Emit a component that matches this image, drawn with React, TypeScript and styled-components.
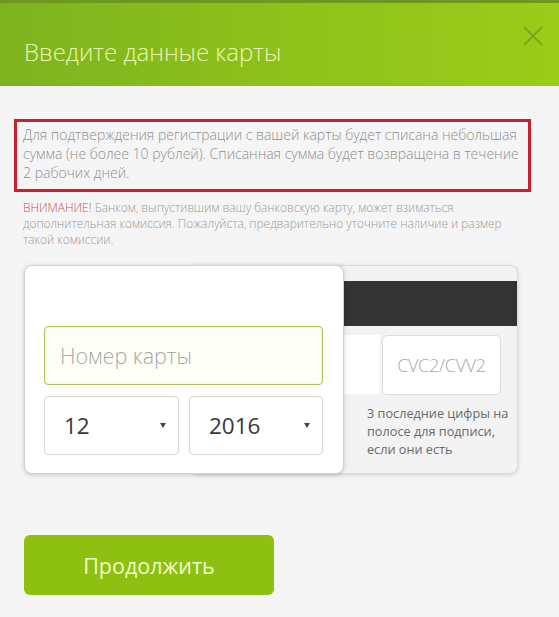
import React from "react";
import styled, { createGlobalStyle } from "styled-components";

const Global = createGlobalStyle`
  html, body { margin: 0; padding: 0; background: #f6f5f6; }
  body { font-family: "Open Sans", "Noto Sans", sans-serif; }
  * { box-sizing: border-box; }
`;

const Page = styled.div`
  width: 559px;
  height: 617px;
  background: #f6f5f6;
  overflow: hidden;
`;

const Header = styled.header`
  height: 86px;
  background: linear-gradient(90deg, #7db31f 0%, #8dc01b 45%, #9ccb18 100%);
  border-top: 3px solid #6d9720;
  display: flex;
  align-items: center;
  justify-content: space-between;
  padding: 15px 16px 0 24px;
`;

const Title = styled.h1`
  margin: 0;
  font-size: 24px;
  font-weight: 300;
  color: #ecf8b4;
  line-height: 1;
`;

const Close = styled.button`
  border: 0;
  background: none;
  padding: 0;
  width: 20px;
  height: 20px;
  align-self: flex-start;
  margin-top: 8px;
  cursor: pointer;
`;

const Content = styled.main`
  padding: 33px 28px 0 14px;
`;

const Notice = styled.div`
  border: 3px solid #c8202e;
  padding: 3px 8px 7px 6px;
  font-size: 14px;
  font-weight: 300;
  line-height: 19px;
  color: #8f8f8f;
`;

const Warning = styled.p`
  margin: 7px 0 0 9px;
  font-size: 11.9px;
  font-weight: 300;
  line-height: 16px;
  color: #999999;
`;

const Attention = styled.span`
  color: #c9524f;
`;

const Cards = styled.div`
  display: grid;
  margin: 18px 0 0 10px;
  width: 494px;
`;

const BackCard = styled.div`
  grid-area: 1 / 1;
  justify-self: end;
  width: 328px;
  height: 209px;
  background: #f3f3f3;
  border: 1px solid #dcdcdc;
  border-radius: 8px;
  box-shadow: 0 1px 4px rgba(0, 0, 0, 0.15);
  padding-top: 15px;
`;

const Stripe = styled.div`
  height: 45px;
  background: #333333;
`;

const SigRow = styled.div`
  display: flex;
  margin-top: 9px;
  padding-right: 16px;
  gap: 2px;
`;

const SigStrip = styled.div`
  flex: 1;
  height: 59px;
  background: #ffffff;
`;

const CvcBox = styled.div`
  width: 119px;
  height: 60px;
  background: #fff;
  border: 1px solid #dcdcdc;
  border-radius: 5px;
  display: flex;
  align-items: center;
  justify-content: center;
  font-size: 18px;
  font-weight: 300;
  color: #a8a8a8;
  letter-spacing: -0.3px;
`;

const Hint = styled.p`
  margin: 9px 0 0 176px;
  font-size: 12.7px;
  line-height: 18px;
  color: #6a6a6a;
`;

const FrontCard = styled.div`
  grid-area: 1 / 1;
  justify-self: start;
  z-index: 1;
  width: 320px;
  height: 209px;
  background: #ffffff;
  border: 1px solid #d2d2d2;
  border-radius: 8px;
  box-shadow: 0 1px 5px rgba(0, 0, 0, 0.18);
  padding: 60px 20px 0 19px;
  display: grid;
  grid-template-columns: 135px 134px;
  grid-template-rows: 59px 59px;
  column-gap: 10px;
  row-gap: 11px;
`;

const NumberInput = styled.div`
  grid-column: 1 / 3;
  border: 1px solid #a9c35e;
  border-radius: 4px;
  background: #fdfef6;
  box-shadow: inset 0 0 3px rgba(190, 220, 120, 0.35);
  display: flex;
  align-items: center;
  padding-left: 15px;
  font-size: 21.5px;
  font-weight: 300;
  color: #a8a8a8;
`;

const Select = styled.div`
  border: 1px solid #d6d6d6;
  border-radius: 4px;
  background: #fff;
  display: flex;
  align-items: center;
  justify-content: space-between;
  padding: 0 12px 0 19px;
  font-size: 22.5px;
  color: #383838;
`;

const Arrow = styled.span`
  width: 0;
  height: 0;
  border-left: 3px solid transparent;
  border-right: 3px solid transparent;
  border-top: 5px solid #444;
`;

const Button = styled.button`
  margin: 61px 0 0 10px;
  width: 250px;
  height: 60px;
  border: 0;
  border-radius: 6px;
  background: #8dc010;
  color: #f0fcc9;
  font-family: "Open Sans", sans-serif;
  font-size: 21.5px;
  font-weight: 500;
  cursor: pointer;
`;

export default function App() {
  return (
    <Page>
      <Global />
      <Header>
        <Title>Введите данные карты</Title>
        <Close aria-label="close">
          <svg width="20" height="20" viewBox="0 0 20 20">
            <path d="M1 1 L19 19 M19 1 L1 19" stroke="#78a51b" strokeWidth="1.8" fill="none" />
          </svg>
        </Close>
      </Header>
      <Content>
        <Notice>
          Для подтверждения регистрации с вашей карты будет списана небольшая сумма (не более 10 рублей). Списанная сумма будет возвращена в течение 2 рабочих дней.
        </Notice>
        <Warning>
          <Attention>ВНИМАНИЕ!</Attention> Банком, выпустившим вашу банковскую карту, может взиматься дополнительная комиссия. Пожалуйста, предварительно уточните наличие и размер такой комиссии.
        </Warning>
        <Cards>
          <BackCard>
            <Stripe />
            <SigRow>
              <SigStrip />
              <CvcBox>CVC2/CVV2</CvcBox>
            </SigRow>
            <Hint>3 последние цифры на полосе для подписи, если они есть</Hint>
          </BackCard>
          <FrontCard>
            <NumberInput>Номер карты</NumberInput>
            <Select>
              12
              <Arrow />
            </Select>
            <Select>
              2016
              <Arrow />
            </Select>
          </FrontCard>
        </Cards>
        <Button>Продолжить</Button>
      </Content>
    </Page>
  );
}
